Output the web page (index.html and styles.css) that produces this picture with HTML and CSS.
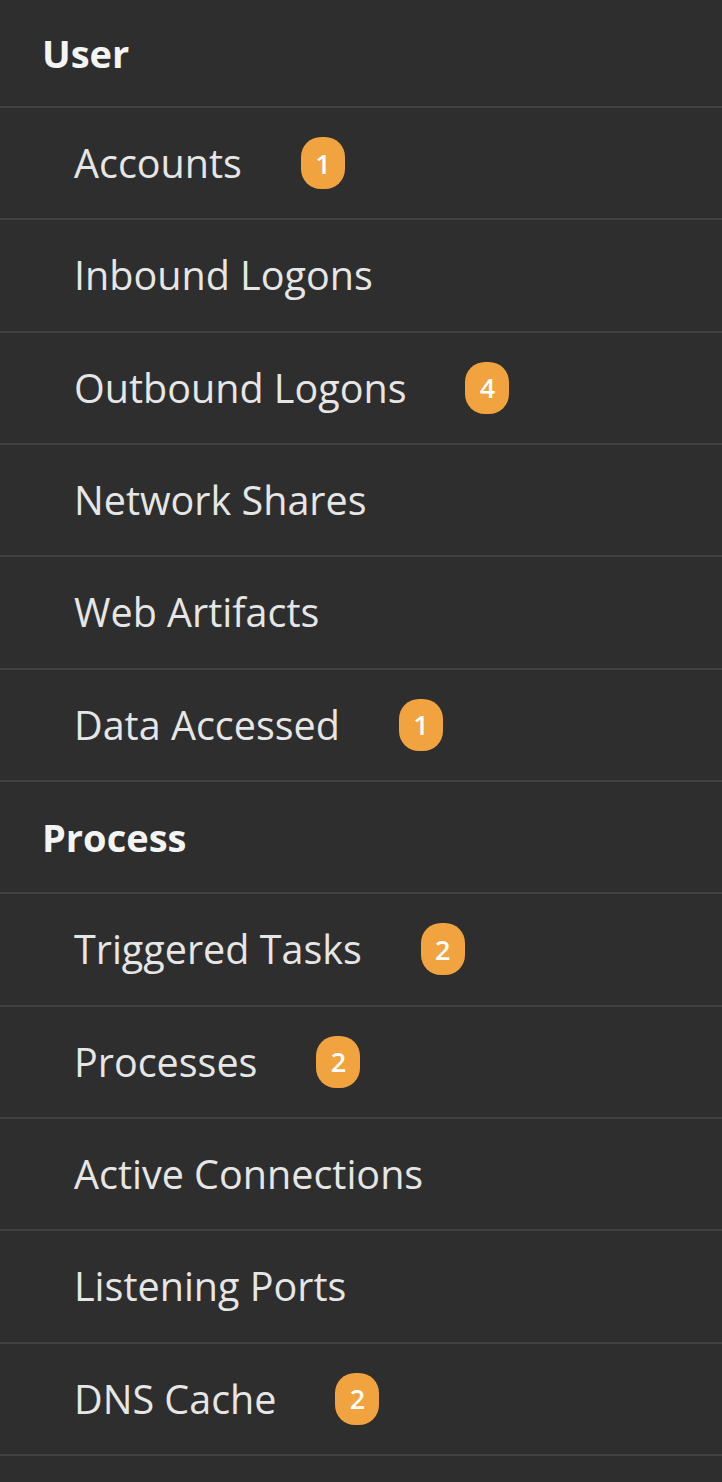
FILE: index.html
```html
<!DOCTYPE html>
<html lang="en">
<head>
<meta charset="utf-8">
<title>Navigation</title>
<link rel="stylesheet" href="styles.css">
</head>
<body>
<nav class="nav">
  <div class="row header first">User</div>
  <div class="row item"><span class="label">Accounts</span><span class="badge">1</span></div>
  <div class="row item"><span class="label">Inbound Logons</span></div>
  <div class="row item"><span class="label">Outbound Logons</span><span class="badge">4</span></div>
  <div class="row item"><span class="label">Network Shares</span></div>
  <div class="row item"><span class="label">Web Artifacts</span></div>
  <div class="row item"><span class="label">Data Accessed</span><span class="badge">1</span></div>
  <div class="row header">Process</div>
  <div class="row item"><span class="label">Triggered Tasks</span><span class="badge">2</span></div>
  <div class="row item"><span class="label">Processes</span><span class="badge">2</span></div>
  <div class="row item"><span class="label">Active Connections</span></div>
  <div class="row item"><span class="label">Listening Ports</span></div>
  <div class="row item"><span class="label">DNS Cache</span><span class="badge">2</span></div>
</nav>
</body>
</html>
```

FILE: styles.css
```css
html, body {
  margin: 0;
  padding: 0;
  background: #2e2e2e;
}
body {
  width: 722px;
  height: 1482px;
  overflow: hidden;
  font-family: "Segoe UI", "Open Sans", "Noto Sans", sans-serif;
}
.nav {
  display: flex;
  flex-direction: column;
}
.row {
  box-sizing: border-box;
  height: 112.33px;
  flex: none;
  display: flex;
  align-items: center;
  border-bottom: 2px solid #414141;
}
.row.first {
  height: 108px;
}
.header {
  padding-left: 42px;
  font-weight: 700;
  font-size: 38px;
  color: #f4f4f4;
}
.item {
  padding-left: 74px;
  font-size: 39.5px;
  color: #e6e6e6;
}
.badge {
  margin-left: 59px;
  width: 44px;
  height: 52px;
  border-radius: 20px;
  background: #f0a33e;
  color: #ffffff;
  font-size: 27px;
  font-weight: 600;
  display: flex;
  align-items: center;
  justify-content: center;
}
```
